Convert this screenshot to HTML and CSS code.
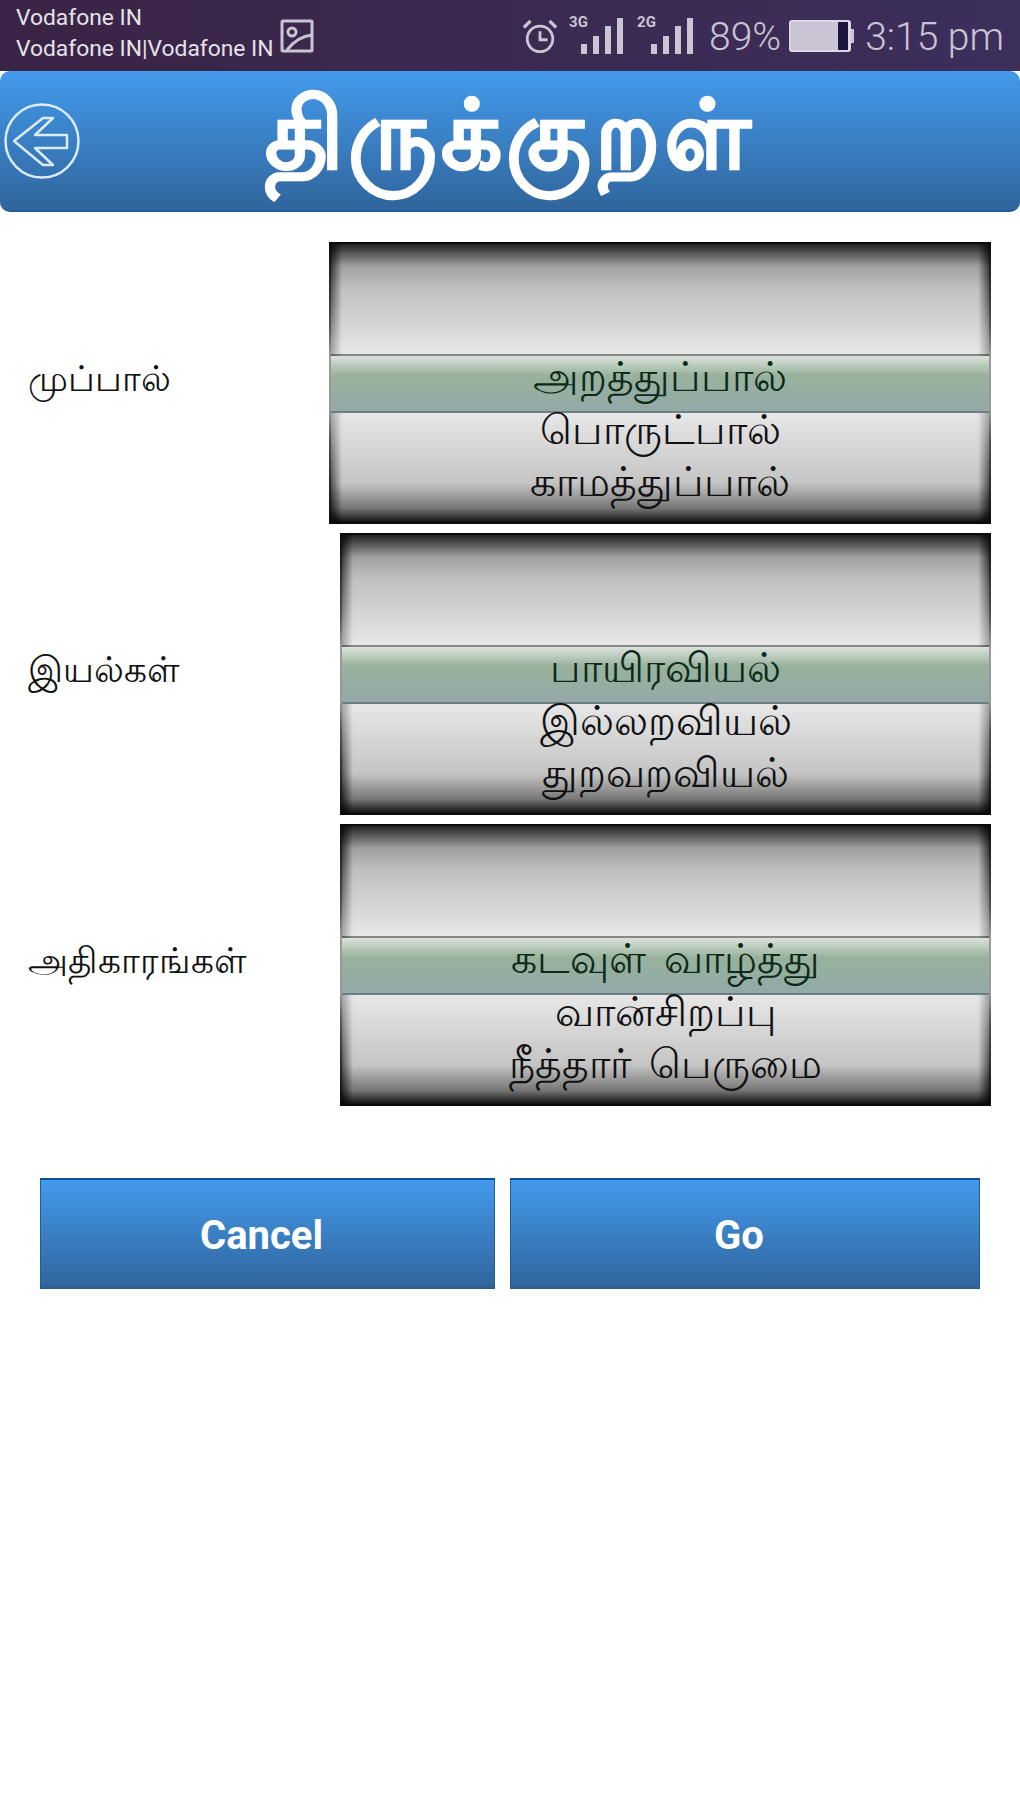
FILE: index.html
```html
<!DOCTYPE html>
<html lang="ta">
<head>
    <meta charset="UTF-8">
    <meta name="viewport" content="width=device-width, initial-scale=1.0">
    <title>திருக்குறள்</title>
    <link rel="stylesheet" href="styles.css">
</head>
<body>
    <div class="statusbar">
        <div class="carrier">
            <div>Vodafone IN</div>
            <div>Vodafone IN|Vodafone IN</div>
        </div>
        <svg class="icon-image" viewBox="0 0 34 34" fill="none" stroke="#cbc5d3" stroke-width="3">
            <rect x="2" y="2" width="30" height="30" rx="1"/>
            <circle cx="12" cy="13" r="4"/>
            <path d="M7 31 C14 22 22 17 32 16"/>
        </svg>
        <div class="status-right">
            <svg class="icon-alarm" viewBox="0 0 38 38" fill="none" stroke="#cbc5d3" stroke-width="3">
                <circle cx="19" cy="22" r="13.5"/>
                <path d="M19 14 V23 H27"/>
                <path d="M2 10 L9 3 M36 10 L29 3" stroke-width="3.5"/>
            </svg>
            <div class="signal">
                <span class="net">3G</span>
                <span class="bar bar1"></span><span class="bar bar2"></span><span class="bar bar3"></span><span class="bar bar4"></span>
            </div>
            <div class="signal signal-2g">
                <span class="net">2G</span>
                <span class="bar bar1"></span><span class="bar bar2"></span><span class="bar bar3"></span><span class="bar bar4"></span>
            </div>
            <span class="percent">89%</span>
            <div class="battery">
                <div class="battery-body"><div class="battery-fill"></div></div>
                <div class="battery-nub"></div>
            </div>
            <span class="time">3:15 pm</span>
        </div>
    </div>

    <div class="header">
        <svg class="back" viewBox="0 0 76 76" fill="none" stroke="#dcebfa" stroke-width="2.5">
            <circle cx="38" cy="38" r="36.5"/>
            <path d="M10 38 L39 15 H49 L31 32 H63 V45 H31 L49 62 H39 Z" stroke-linejoin="round"/>
        </svg>
        <h1 class="title">திருக்குறள்</h1>
        <div></div>
    </div>

    <div class="form">
        <div class="row">
            <div class="label">முப்பால்</div>
            <div class="wheel wheel-wide">
                <div class="slot-blank"></div>
                <div class="slot-selected">அறத்துப்பால்</div>
                <div class="slot">பொருட்பால்</div>
                <div class="slot">காமத்துப்பால்</div>
            </div>
        </div>
        <div class="row">
            <div class="label">இயல்கள்</div>
            <div class="wheel">
                <div class="slot-blank"></div>
                <div class="slot-selected">பாயிரவியல்</div>
                <div class="slot">இல்லறவியல்</div>
                <div class="slot">துறவறவியல்</div>
            </div>
        </div>
        <div class="row">
            <div class="label">அதிகாரங்கள்</div>
            <div class="wheel">
                <div class="slot-blank"></div>
                <div class="slot-selected">கடவுள் வாழ்த்து</div>
                <div class="slot">வான்சிறப்பு</div>
                <div class="slot">நீத்தார் பெருமை</div>
            </div>
        </div>
    </div>

    <div class="buttons">
        <button class="btn btn-cancel">Cancel</button>
        <button class="btn btn-go">Go</button>
    </div>
</body>
</html>
```
FILE: styles.css
```css
body {
    margin: 0;
    background: white;
    font-family: "Liberation Sans", Arial, sans-serif;
}
.statusbar {
    height: 71px;
    display: flex;
    align-items: center;
    padding: 0 16px;
    box-sizing: border-box;
    background: linear-gradient(to right, #3a2445, #3c2f5c);
    color: #e6e2ea;
}
.carrier {
    font-family: Roboto, sans-serif;
    font-size: 22.8px;
    line-height: 31px;
    padding-bottom: 6px;
}
.icon-image {
    width: 34px;
    height: 34px;
    margin-left: 6px;
}
.status-right {
    margin-left: auto;
    display: flex;
    align-items: center;
    color: #cbc5d3;
}
.icon-alarm {
    width: 36px;
    height: 36px;
    margin-right: 11px;
}
.signal {
    position: relative;
    width: 54px;
    height: 36px;
    margin-right: 14px;
    display: flex;
    align-items: flex-end;
    justify-content: flex-end;
    gap: 6px;
}
.signal-2g {
    width: 56px;
    margin-right: 16px;
}
.net {
    position: absolute;
    top: -5px;
    left: 0;
    font-family: Roboto, sans-serif;
    font-size: 15px;
    font-weight: bold;
}
.bar {
    width: 6px;
    background: #cbc5d3;
}
.bar1 { height: 10px; }
.bar2 { height: 18px; }
.bar3 { height: 28px; }
.bar4 { height: 36px; }
.percent, .time {
    font-family: Roboto, sans-serif;
    font-weight: 300;
    font-size: 39px;
    line-height: 46px;
    padding-top: 2px;
}
.battery {
    display: flex;
    align-items: center;
    margin: 0 11px 0 8px;
}
.battery-body {
    width: 62px;
    height: 32px;
    box-sizing: border-box;
    border: 2px solid #dcd8e2;
    border-right-width: 3px;
    border-radius: 3px;
    background: #1e1640;
}
.battery-fill {
    width: 47px;
    height: 100%;
    background: #c9c3d3;
}
.battery-nub {
    width: 3px;
    height: 14px;
    background: #cbc5d3;
}
.header {
    height: 141px;
    display: grid;
    grid-template-columns: 1fr auto 1fr;
    align-items: center;
    box-sizing: border-box;
    border-radius: 10px;
    border-bottom: 2px solid #1c5e96;
    background: linear-gradient(#439aec, #30659c);
}
.back {
    width: 76px;
    height: 76px;
    margin-left: 4px;
}
.title {
    margin: 0;
    padding-bottom: 10px;
    color: white;
    font-family: "Liberation Serif", serif;
    font-weight: bold;
    font-size: 96px;
    line-height: 112px;
    letter-spacing: 4px;
    -webkit-text-stroke: 1.5px white;
}
.form {
    display: flex;
    flex-direction: column;
    gap: 9px;
    padding: 30px 29px 0 28px;
}
.row {
    display: flex;
    align-items: center;
    justify-content: space-between;
}
.label {
    padding-bottom: 5px;
    font-size: 36px;
    color: #111;
}
.wheel {
    position: relative;
    width: 651px;
    height: 282px;
    box-sizing: border-box;
    border: 2px solid;
    border-image: linear-gradient(#0a0a0a, #555 30%, #999 40%, #999 60%, #555 70%, #0a0a0a) 1;
    font-size: 41px;
    word-spacing: 6px;
    color: #111;
    text-align: center;
    background: linear-gradient(#222 0%, #a0a0a0 8%, #c0c0c0 16%, #e8e8e8 40%, #e8e8e8 60%, #c4c4c4 86%, #777 95%, #111 100%);
}
.wheel::before {
    content: "";
    position: absolute;
    top: 0;
    left: 0;
    right: 0;
    bottom: 0;
    background:
        linear-gradient(to right, rgba(0, 0, 0, 0.75), transparent 11px),
        linear-gradient(to left, rgba(0, 0, 0, 0.75), transparent 11px);
    -webkit-mask-image: linear-gradient(#000, rgba(0, 0, 0, 0.4) 36%, rgba(0, 0, 0, 0.4) 64%, #000);
    mask-image: linear-gradient(#000, rgba(0, 0, 0, 0.4) 36%, rgba(0, 0, 0, 0.4) 64%, #000);
}
.wheel-wide {
    width: 662px;
}
.slot-blank {
    height: 110px;
    border-bottom: 2px solid #888;
}
.slot-selected {
    position: relative;
    height: 55px;
    line-height: 42px;
    border-bottom: 2px solid #6d7f82;
    color: #0d2a18;
    background: linear-gradient(#dbe3dc, #98b29c 35%, #92a9a8);
}
.slot {
    position: relative;
    height: 52px;
    line-height: 35px;
}
.buttons {
    display: flex;
    gap: 15px;
    padding: 72px 0 0 40px;
}
.btn {
    height: 111px;
    padding: 4px 12px 0 0;
    border: none;
    border-top: 2px solid #0d4f92;
    border-bottom: 2px solid #2a5d8c;
    border-left: 1px solid #1c5e96;
    border-right: 1px solid #1c5e96;
    background: linear-gradient(#439aec, #30659c);
    color: white;
    font-family: Roboto, sans-serif;
    font-weight: bold;
    font-size: 40px;
}
.btn-cancel {
    width: 455px;
}
.btn-go {
    width: 470px;
}
```
